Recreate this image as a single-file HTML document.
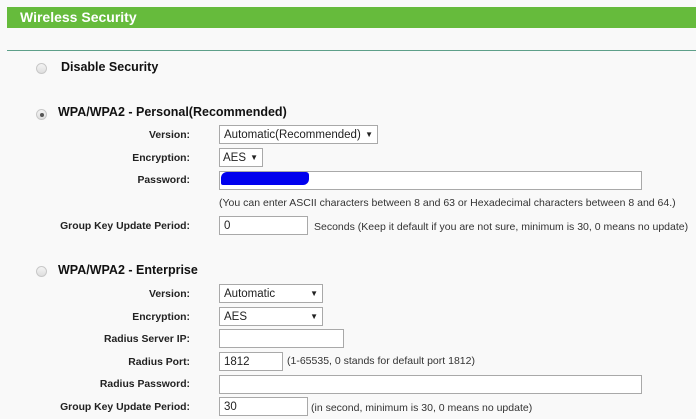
<!DOCTYPE html>
<html><head><meta charset="utf-8"><style>
*{margin:0;padding:0;box-sizing:border-box}
body{width:696px;height:419px;background:#f9f9f9;font-family:"Liberation Sans",Arial,sans-serif;position:relative;overflow:hidden;color:#000}
.a{position:absolute;white-space:nowrap}
.bar{left:7px;top:7px;width:689px;height:21px;background:#66bb3c;color:#fff;font-weight:bold;font-size:14px;line-height:21px;padding-left:13px}
.line{left:7px;top:50px;width:689px;height:1px;background:#5ea08a}
.r{width:11px;height:11px;border-radius:50%;border:1px solid #c8c8c8;background:linear-gradient(#f4f4f4,#dedede)}
.r.on::after{content:"";position:absolute;left:2.5px;top:2.5px;width:4px;height:4px;border-radius:50%;background:#555}
.h{font-weight:bold;font-size:12.5px;color:#111}
.l{font-weight:bold;font-size:10.4px;color:#222;right:506px;text-align:right;top:0}
.i{background:#fff;border:1px solid #a9a9a9;height:19px;font-size:11.5px;line-height:18px;padding-left:4px;color:#222}
.s::after{content:"▼";position:absolute;right:4px;top:0;font-size:8px}
.t{font-size:10.5px;color:#333}
</style></head><body>
<div class="a bar">Wireless Security</div>
<div class="a line"></div>
<div class="a r" style="left:36px;top:63px"></div>
<div class="a h" style="left:61px;top:60px">Disable Security</div>
<div class="a r on" style="left:36px;top:109px"></div>
<div class="a h" style="left:58px;top:105px">WPA/WPA2 - Personal(Recommended)</div>

<div class="a l" style="top:130px">Version:</div>
<div class="a i s" style="left:219px;top:125px;width:159px">Automatic(Recommended)</div>
<div class="a l" style="top:153px">Encryption:</div>
<div class="a i s" style="left:219px;top:148px;width:44px;padding-left:3px">AES</div>
<div class="a l" style="top:175px">Password:</div>
<div class="a i" style="left:219px;top:171px;width:423px"></div>
<div class="a" style="left:221px;top:172px;width:88px;height:13px;background:#0000ee;border-radius:6px 3px 6px 2px"></div>
<div class="a t" style="left:219px;top:197px">(You can enter ASCII characters between 8 and 63 or Hexadecimal characters between 8 and 64.)</div>
<div class="a l" style="top:221px">Group Key Update Period:</div>
<div class="a i" style="left:219px;top:216px;width:89px">0</div>
<div class="a t" style="left:314px;top:221px">Seconds (Keep it default if you are not sure, minimum is 30, 0 means no update)</div>

<div class="a r" style="left:36px;top:266px"></div>
<div class="a h" style="left:58px;top:263px">WPA/WPA2 - Enterprise</div>
<div class="a l" style="top:289px">Version:</div>
<div class="a i s" style="left:219px;top:284px;width:104px">Automatic</div>
<div class="a l" style="top:312px">Encryption:</div>
<div class="a i s" style="left:219px;top:307px;width:104px">AES</div>
<div class="a l" style="top:334px">Radius Server IP:</div>
<div class="a i" style="left:219px;top:329px;width:125px"></div>
<div class="a l" style="top:357px">Radius Port:</div>
<div class="a i" style="left:219px;top:352px;width:64px">1812</div>
<div class="a t" style="left:287px;top:355px">(1-65535, 0 stands for default port 1812)</div>
<div class="a l" style="top:379px">Radius Password:</div>
<div class="a i" style="left:219px;top:375px;width:423px"></div>
<div class="a l" style="top:402px">Group Key Update Period:</div>
<div class="a i" style="left:219px;top:397px;width:89px">30</div>
<div class="a t" style="left:311px;top:402px">(in second, minimum is 30, 0 means no update)</div>
</body></html>
